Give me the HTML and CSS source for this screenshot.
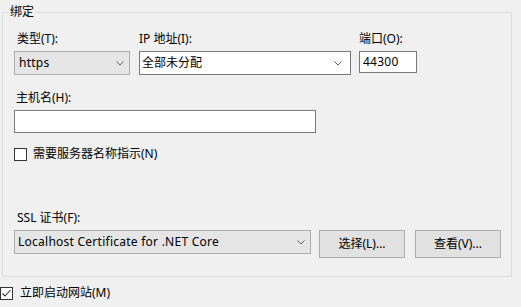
FILE: index.html
```html
<!DOCTYPE html>
<html lang="zh-CN">
<head>
    <meta charset="UTF-8">
    <title>绑定</title>
    <link rel="stylesheet" href="styles.css">
</head>
<body>
    <fieldset class="binding">
        <legend>绑定</legend>

        <div class="row-top">
            <div class="field field-type">
                <label>类型(T):</label>
                <div class="combo">
                    <span class="latin">https</span>
                    <svg class="chevron" width="8" height="5" viewBox="0 0 8 5"><path d="M0.5 0.5 L4 4 L7.5 0.5" fill="none" stroke="#606060" stroke-width="1"/></svg>
                </div>
            </div>
            <div class="field field-ip">
                <label>IP 地址(I):</label>
                <div class="combo combo-edit">
                    <span>全部未分配</span>
                    <svg class="chevron" width="8" height="5" viewBox="0 0 8 5"><path d="M0.5 0.5 L4 4 L7.5 0.5" fill="none" stroke="#606060" stroke-width="1"/></svg>
                </div>
            </div>
            <div class="field field-port">
                <label>端口(O):</label>
                <div class="textbox latin">44300</div>
            </div>
        </div>

        <div class="field field-host">
            <label>主机名(H):</label>
            <div class="textbox host-box"></div>
        </div>

        <div class="check-row sni">
            <span class="checkbox"></span>
            <span>需要服务器名称指示(N)</span>
        </div>

        <div class="field field-ssl">
            <label>SSL 证书(F):</label>
            <div class="ssl-row">
                <div class="combo ssl-combo">
                    <span class="latin">Localhost Certificate for .NET Core</span>
                    <svg class="chevron" width="8" height="5" viewBox="0 0 8 5"><path d="M0.5 0.5 L4 4 L7.5 0.5" fill="none" stroke="#606060" stroke-width="1"/></svg>
                </div>
                <button class="btn">选择(L)...</button>
                <button class="btn">查看(V)...</button>
            </div>
        </div>
    </fieldset>

    <div class="check-row start-now">
        <span class="checkbox checked">
            <svg width="11" height="11" viewBox="0 0 11 11"><path d="M1.5 5.5 L4 8 L9.5 2" fill="none" stroke="#333" stroke-width="1.1"/></svg>
        </span>
        <span>立即启动网站(M)</span>
    </div>
</body>
</html>
```

FILE: styles.css
```css
* {
    box-sizing: border-box;
}
body {
    margin: 0;
    padding: 4px 0 0 0;
    background: #f0f0f0;
    color: #000;
    font-family: "Noto Sans", "Noto Sans CJK SC", sans-serif;
    font-size: 12px;
    line-height: 16px;
}
.latin {
    letter-spacing: 0.25px;
}
.binding {
    margin: 0 0 0 2px;
    padding: 11px 10px 18px 11px;
    width: 510px;
    border: 1px solid #dcdcdc;
    min-inline-size: 0;
}
.binding legend {
    padding: 0 2px;
    margin-left: -6px;
    line-height: 16px;
}
.field label {
    display: block;
    padding-left: 3px;
    margin-bottom: 4px;
}
.row-top {
    display: flex;
    gap: 9px;
}
.field-ip label,
.field-port label {
    padding-left: 0;
}
.field-port {
    margin-left: -1px;
}
.combo {
    height: 24px;
    border: 1px solid #adadad;
    background: #e5e5e5;
    display: flex;
    align-items: center;
    justify-content: space-between;
    padding: 0 5px 0 4px;
}
.field-type .combo {
    width: 116px;
}
.combo-edit {
    width: 212px;
    background: #fff;
    border-color: #7a7a7a;
    padding: 0 8px 0 2px;
}
.textbox {
    height: 22px;
    border: 1px solid #7a7a7a;
    background: #fff;
    padding: 0 3px;
    line-height: 20px;
    width: 58px;
}
.field-port .textbox {
    margin-top: 1px;
}
.field-host {
    margin-top: 15px;
}
.field-host label {
    padding-left: 2px;
}
.host-box {
    width: 302px;
    height: 23px;
}
.check-row {
    display: flex;
    align-items: center;
    gap: 6px;
}
.sni {
    margin-top: 13px;
}
.checkbox {
    width: 13px;
    height: 13px;
    border: 1px solid #333;
    background: #fff;
    display: inline-block;
}
.checked {
    display: flex;
}
.field-ssl {
    margin-top: 48px;
}
.ssl-row {
    display: flex;
    align-items: flex-start;
}
.ssl-combo {
    width: 297px;
    padding-left: 3px;
}
.btn {
    margin-left: 8px;
    width: 86px;
    height: 28px;
    border: 1px solid #adadad;
    background: #e1e1e1;
    font: inherit;
    color: #000;
    padding: 0;
}
.btn + .btn {
    margin-left: 10px;
}
.start-now {
    margin-top: 8px;
    gap: 7px;
}
```
